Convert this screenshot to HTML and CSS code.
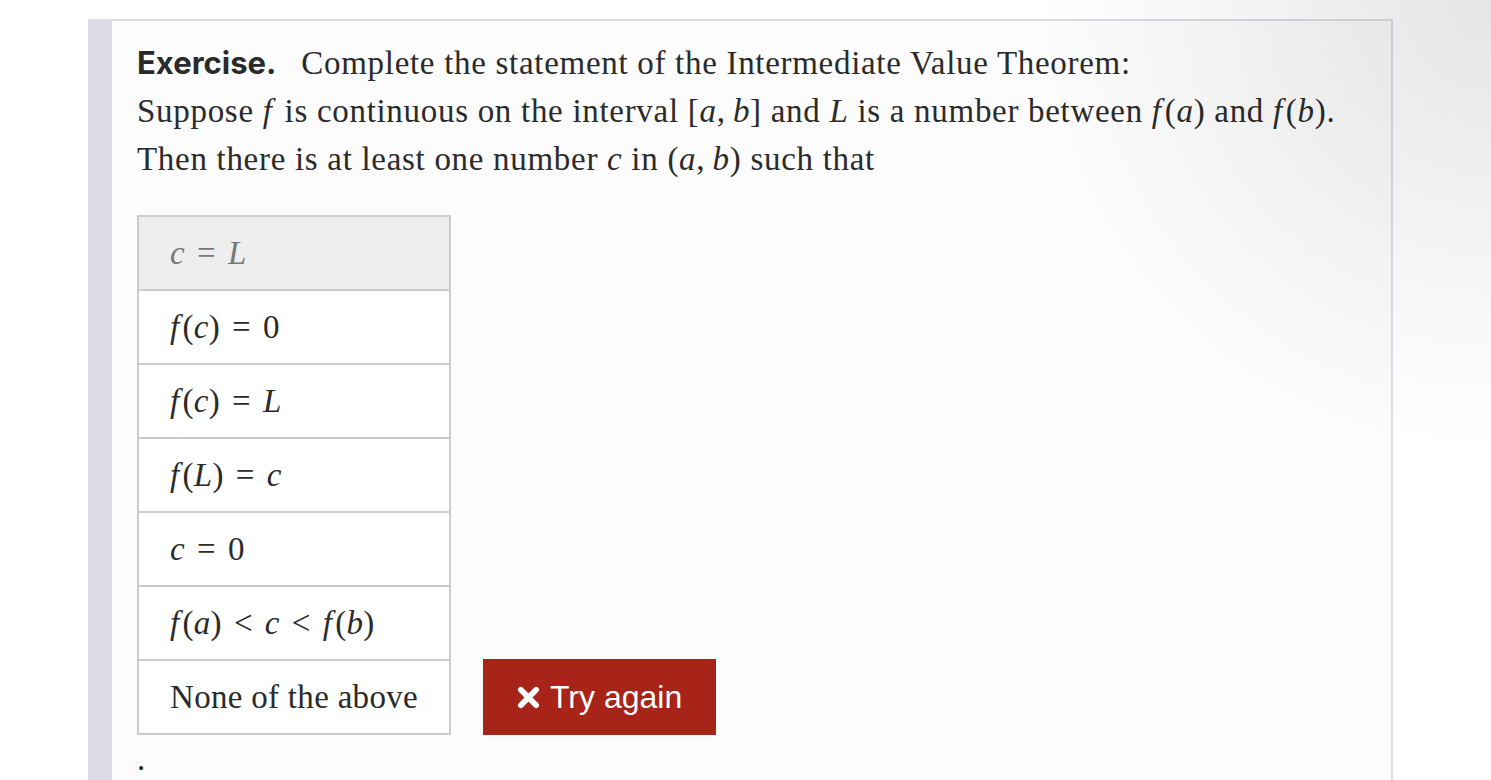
FILE: index.html
```html
<!DOCTYPE html>
<html lang="en">

<head>
    <meta charset="UTF-8">
    <title>Intermediate Value Theorem</title>
    <link rel="stylesheet" href="styles.css">
</head>

<body>
    <!-- exercise block -->
    <div class="exercise">
        <p class="line">
            <span class="label">Exercise.</span>
            Complete the statement of the Intermediate Value Theorem:
        </p>
        <p class="line">
            Suppose <i class="m f">f</i> is continuous on the interval
            [<i class="m">a</i>,&thinsp;<i class="m">b</i>] and <i class="m">L</i> is a number between
            <i class="m f">f</i>(<i class="m">a</i>) and <i class="m f">f</i>(<i class="m">b</i>).
        </p>
        <p class="line">
            Then there is at least one number <i class="m">c</i> in (<i class="m">a</i>,&thinsp;<i class="m">b</i>) such that
        </p>

        <!-- answer choices -->
        <div class="answer-row">
            <div class="choices">
                <div class="choice selected"><i class="m">c</i><span class="op">=</span><i class="m">L</i></div>
                <div class="choice"><i class="m f">f</i>(<i class="m">c</i>)<span class="op">=</span>0</div>
                <div class="choice"><i class="m f">f</i>(<i class="m">c</i>)<span class="op">=</span><i class="m">L</i></div>
                <div class="choice"><i class="m f">f</i>(<i class="m">L</i>)<span class="op">=</span><i class="m">c</i></div>
                <div class="choice"><i class="m">c</i><span class="op">=</span>0</div>
                <div class="choice"><i class="m f">f</i>(<i class="m">a</i>)<span class="op">&lt;</span><i class="m">c</i><span class="op">&lt;</span><i class="m f">f</i>(<i class="m">b</i>)</div>
                <div class="choice">None of the above</div>
            </div>
            <button class="try-again" type="button">
                <svg width="23" height="23" viewBox="0 0 24 24">
                    <path d="M4 4 L20 20 M20 4 L4 20" stroke="#fff" stroke-width="6" stroke-linecap="round" />
                </svg>
                Try again
            </button>
        </div>
        <p class="line">.</p>
    </div>

    <div class="shade"></div>
</body>

</html>
```

FILE: styles.css
```css
/* page */
body {
    margin: 0;
    background: #fff;
    color: #2b2b2b;
    font-family: "Liberation Serif", serif;
    overflow: hidden;
}

/* exercise box */
.exercise {
    box-sizing: border-box;
    width: 1305px;
    margin: 19px 0 0 88px;
    padding: 18px 24px 0 25px;
    border-left: 24px solid #dcdce8;
    border-top: 2px solid #dcdce8;
    border-right: 2px solid #dcdce8;
    background: #fcfcfc;
}

.line {
    margin: 0;
    font-size: 33px;
    letter-spacing: 0.7px;
    line-height: 48px;
}

.label {
    font-family: Inter, "Liberation Sans", sans-serif;
    font-weight: 700;
    font-size: 31px;
    letter-spacing: 0;
    color: #2a2a2a;
    margin-right: 16px;
}

.m {
    font-style: italic;
}

.m.f {
    margin-right: 3px;
}

.op {
    margin: 0 12px;
}

/* choices + button */
.answer-row {
    display: flex;
    align-items: flex-end;
    gap: 32px;
    margin-top: 32px;
}

.choices {
    width: 310px;
    border: 2px solid #cccccc;
    border-bottom: none;
    background: #fff;
}

.choice {
    height: 72px;
    line-height: 72px;
    padding-left: 31px;
    font-size: 33px;
    letter-spacing: 0.3px;
    border-bottom: 2px solid #cccccc;
}

.choice.selected {
    background: #eeeeee;
    color: #777;
}

.try-again {
    display: flex;
    align-items: center;
    gap: 10px;
    height: 76px;
    padding: 0 34px;
    border: none;
    background: #a82318;
    color: #fff;
    font-family: "Liberation Sans", sans-serif;
    font-size: 32px;
}

/* light vignette in the top right corner */
.shade {
    position: fixed;
    inset: 0;
    pointer-events: none;
    background: radial-gradient(circle at 100% 0, rgba(0, 0, 0, 0.1) 0, rgba(0, 0, 0, 0.03) 300px, rgba(0, 0, 0, 0) 450px);
}
```
